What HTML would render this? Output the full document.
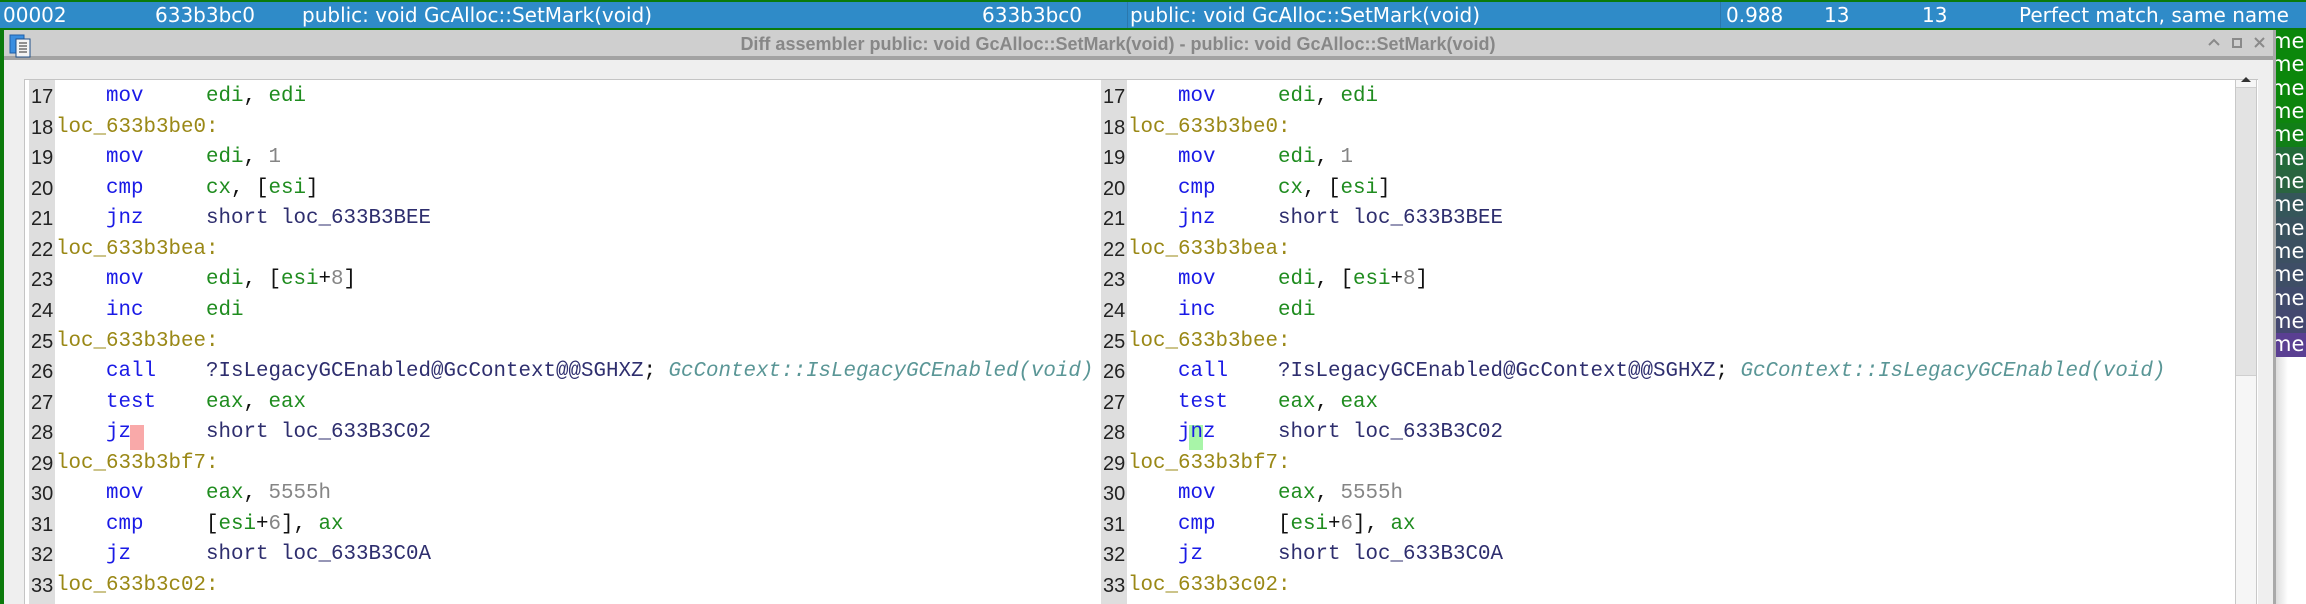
<!DOCTYPE html>
<html><head><meta charset="utf-8"><style>
*{margin:0;padding:0;box-sizing:border-box}
body{width:2306px;height:604px;overflow:hidden;background:#fff;position:relative;font-family:"DejaVu Sans","Liberation Sans",sans-serif}
.abs{position:absolute}
#top{left:0;top:0;width:2306px;height:30px;background:#2f8bc8;border-top:2px solid #0b7a0b;border-bottom:2px solid #0b7a0b;color:#fff;font-size:20px;line-height:26px}
#top span{position:absolute;top:0;white-space:nowrap}
.strip{left:2276px;width:30px;height:23.4px;color:#fff;font-size:21px;line-height:22px;overflow:hidden}
.strip span{position:absolute;left:-5px}
#dlg{left:0;top:30px;width:2276px;height:574px;background:#efefef;border-left:4px solid #0b7a0b;border-right:3px solid #a9a9a9}
#title{left:4px;top:30px;width:2269px;height:30px;background:#cfcfcf;border-bottom:4px solid #a3a3a3}
#ttext{left:0;top:31px;width:2236px;text-align:center;font-family:"Liberation Sans",sans-serif;font-weight:bold;font-size:18px;color:#878787;line-height:26px}
#code{left:24px;top:79px;width:2234px;height:525px;background:#fff;border-top:1px solid #c4c4c4;border-left:1px solid #c4c4c4;overflow:hidden}
.gut{top:80px;width:26px;height:524px;background:#dedede}
.pane{top:82px;font-family:"Liberation Mono",monospace;font-size:20.83px;line-height:30.56px;white-space:pre;overflow:hidden;height:522px}
.num{top:82px;font-family:"Liberation Sans",sans-serif;font-size:20px;line-height:30.56px;color:#222;white-space:pre}
.m{color:#1a1ae6}.r{color:#1f8c1f}.n{color:#858585}.l{color:#9a8816}.s{color:#2e2e6e}.c{color:#5a9696;font-style:italic}.k{color:#111}
</style></head><body>
<div id="top" class="abs">
<span style="left:3px">00002</span>
<span style="left:155px">633b3bc0</span>
<span style="left:302px">public: void GcAlloc::SetMark(void)</span>
<span style="left:982px">633b3bc0</span>
<div class="abs" style="left:1127px;top:0;width:1px;height:26px;background:#2a78ad"></div>
<span style="left:1130px">public: void GcAlloc::SetMark(void)</span>
<div class="abs" style="left:1720px;top:0;width:1px;height:26px;background:#2a78ad"></div>
<span style="left:1726px">0.988</span>
<span style="left:1824px">13</span>
<span style="left:1922px">13</span>
<span style="left:2019px">Perfect match, same name</span>
</div>
<div class="abs strip" style="top:30px;background:#0b870b"><span>me</span></div>
<div class="abs strip" style="top:53.3px;background:#0b870b"><span>me</span></div>
<div class="abs strip" style="top:76.7px;background:#0b870b"><span>me</span></div>
<div class="abs strip" style="top:100px;background:#0e840e"><span>me</span></div>
<div class="abs strip" style="top:123.3px;background:#117f17"><span>me</span></div>
<div class="abs strip" style="top:146.7px;background:#236a3a"><span>me</span></div>
<div class="abs strip" style="top:170px;background:#2a6440"><span>me</span></div>
<div class="abs strip" style="top:193.3px;background:#35565a"><span>me</span></div>
<div class="abs strip" style="top:216.7px;background:#3a525e"><span>me</span></div>
<div class="abs strip" style="top:240px;background:#3c5062"><span>me</span></div>
<div class="abs strip" style="top:263.3px;background:#3e4e66"><span>me</span></div>
<div class="abs strip" style="top:286.7px;background:#414b6c"><span>me</span></div>
<div class="abs strip" style="top:310px;background:#444870"><span>me</span></div>
<div class="abs strip" style="top:333.3px;background:#5a3f92"><span>me</span></div>
<div class="abs" style="left:2276px;top:357px;width:30px;height:247px;background:linear-gradient(90deg,#ddd,#fff 40%)"></div>
<div id="dlg" class="abs"></div>
<div id="title" class="abs"></div>
<svg class="abs" style="left:9px;top:34px" width="24" height="24" viewBox="0 0 24 24">
<rect x="1" y="1" width="14" height="18" fill="#3a8ee0" stroke="#1f5fa8"/>
<rect x="7" y="5" width="14" height="18" fill="#f4f4f4" stroke="#1f4f88"/>
<path d="M10 9h8M10 12h8M10 15h8M10 18h8" stroke="#555" stroke-width="1.3"/>
</svg>
<div id="ttext" class="abs">Diff assembler public: void GcAlloc::SetMark(void) - public: void GcAlloc::SetMark(void)</div>
<svg class="abs" style="left:2205px;top:32px" width="64" height="22" viewBox="0 0 64 22">
<path d="M4 13l5-5 5 5" fill="none" stroke="#8a8a8a" stroke-width="2"/>
<rect x="28" y="7" width="8" height="8" fill="none" stroke="#8a8a8a" stroke-width="2"/>
<path d="M50 6l9 9M59 6l-9 9" stroke="#8a8a8a" stroke-width="2"/>
</svg>
<div id="code" class="abs"></div>
<div class="abs gut" style="left:29px"></div>
<div class="abs gut" style="left:1101px"></div>
<div class="abs" style="left:130px;top:425px;width:14px;height:25px;background:#f9a9a9"></div>
<div class="abs" style="left:1189px;top:425px;width:14px;height:25px;background:#a8f5a8"></div>
<div class="abs num" style="left:31px">17
18
19
20
21
22
23
24
25
26
27
28
29
30
31
32
33</div>
<div class="abs num" style="left:1103px">17
18
19
20
21
22
23
24
25
26
27
28
29
30
31
32
33</div>
<div class="abs pane" style="left:56px;width:1045px"><span class="m">    mov     </span><span class="r">edi</span><span class="k">, </span><span class="r">edi</span>
<span class="l">loc_633b3be0:</span>
<span class="m">    mov     </span><span class="r">edi</span><span class="k">, </span><span class="n">1</span>
<span class="m">    cmp     </span><span class="r">cx</span><span class="k">, [</span><span class="r">esi</span><span class="k">]</span>
<span class="m">    jnz     </span><span class="s">short loc_633B3BEE</span>
<span class="l">loc_633b3bea:</span>
<span class="m">    mov     </span><span class="r">edi</span><span class="k">, [</span><span class="r">esi</span><span class="k">+</span><span class="n">8</span><span class="k">]</span>
<span class="m">    inc     </span><span class="r">edi</span>
<span class="l">loc_633b3bee:</span>
<span class="m">    call    </span><span class="s">?IsLegacyGCEnabled@GcContext@@SGHXZ</span><span class="k">; </span><span class="c">GcContext::IsLegacyGCEnabled(void)</span>
<span class="m">    test    </span><span class="r">eax</span><span class="k">, </span><span class="r">eax</span>
<span class="m">    jz      </span><span class="s">short loc_633B3C02</span>
<span class="l">loc_633b3bf7:</span>
<span class="m">    mov     </span><span class="r">eax</span><span class="k">, </span><span class="n">5555h</span>
<span class="m">    cmp     </span><span class="k">[</span><span class="r">esi</span><span class="k">+</span><span class="n">6</span><span class="k">], </span><span class="r">ax</span>
<span class="m">    jz      </span><span class="s">short loc_633B3C0A</span>
<span class="l">loc_633b3c02:</span></div>
<div class="abs pane" style="left:1128px;width:1105px"><span class="m">    mov     </span><span class="r">edi</span><span class="k">, </span><span class="r">edi</span>
<span class="l">loc_633b3be0:</span>
<span class="m">    mov     </span><span class="r">edi</span><span class="k">, </span><span class="n">1</span>
<span class="m">    cmp     </span><span class="r">cx</span><span class="k">, [</span><span class="r">esi</span><span class="k">]</span>
<span class="m">    jnz     </span><span class="s">short loc_633B3BEE</span>
<span class="l">loc_633b3bea:</span>
<span class="m">    mov     </span><span class="r">edi</span><span class="k">, [</span><span class="r">esi</span><span class="k">+</span><span class="n">8</span><span class="k">]</span>
<span class="m">    inc     </span><span class="r">edi</span>
<span class="l">loc_633b3bee:</span>
<span class="m">    call    </span><span class="s">?IsLegacyGCEnabled@GcContext@@SGHXZ</span><span class="k">; </span><span class="c">GcContext::IsLegacyGCEnabled(void)</span>
<span class="m">    test    </span><span class="r">eax</span><span class="k">, </span><span class="r">eax</span>
<span class="m">    jnz     </span><span class="s">short loc_633B3C02</span>
<span class="l">loc_633b3bf7:</span>
<span class="m">    mov     </span><span class="r">eax</span><span class="k">, </span><span class="n">5555h</span>
<span class="m">    cmp     </span><span class="k">[</span><span class="r">esi</span><span class="k">+</span><span class="n">6</span><span class="k">], </span><span class="r">ax</span>
<span class="m">    jz      </span><span class="s">short loc_633B3C0A</span>
<span class="l">loc_633b3c02:</span></div>
<div class="abs" style="left:2235px;top:80px;width:22px;height:524px;background:#f6f6f6;border-left:1px solid #c8c8c8;border-right:1px solid #c8c8c8"></div>
<div class="abs" style="left:2236px;top:87px;width:20px;height:289px;background:#e3e3e3;border-top:1px solid #cfcfcf;border-bottom:1px solid #cfcfcf"></div>
<svg class="abs" style="left:2238px;top:73px" width="16" height="12" viewBox="0 0 16 12"><path d="M3 9l5-5 5 5z" fill="#333"/></svg>
</body></html>
